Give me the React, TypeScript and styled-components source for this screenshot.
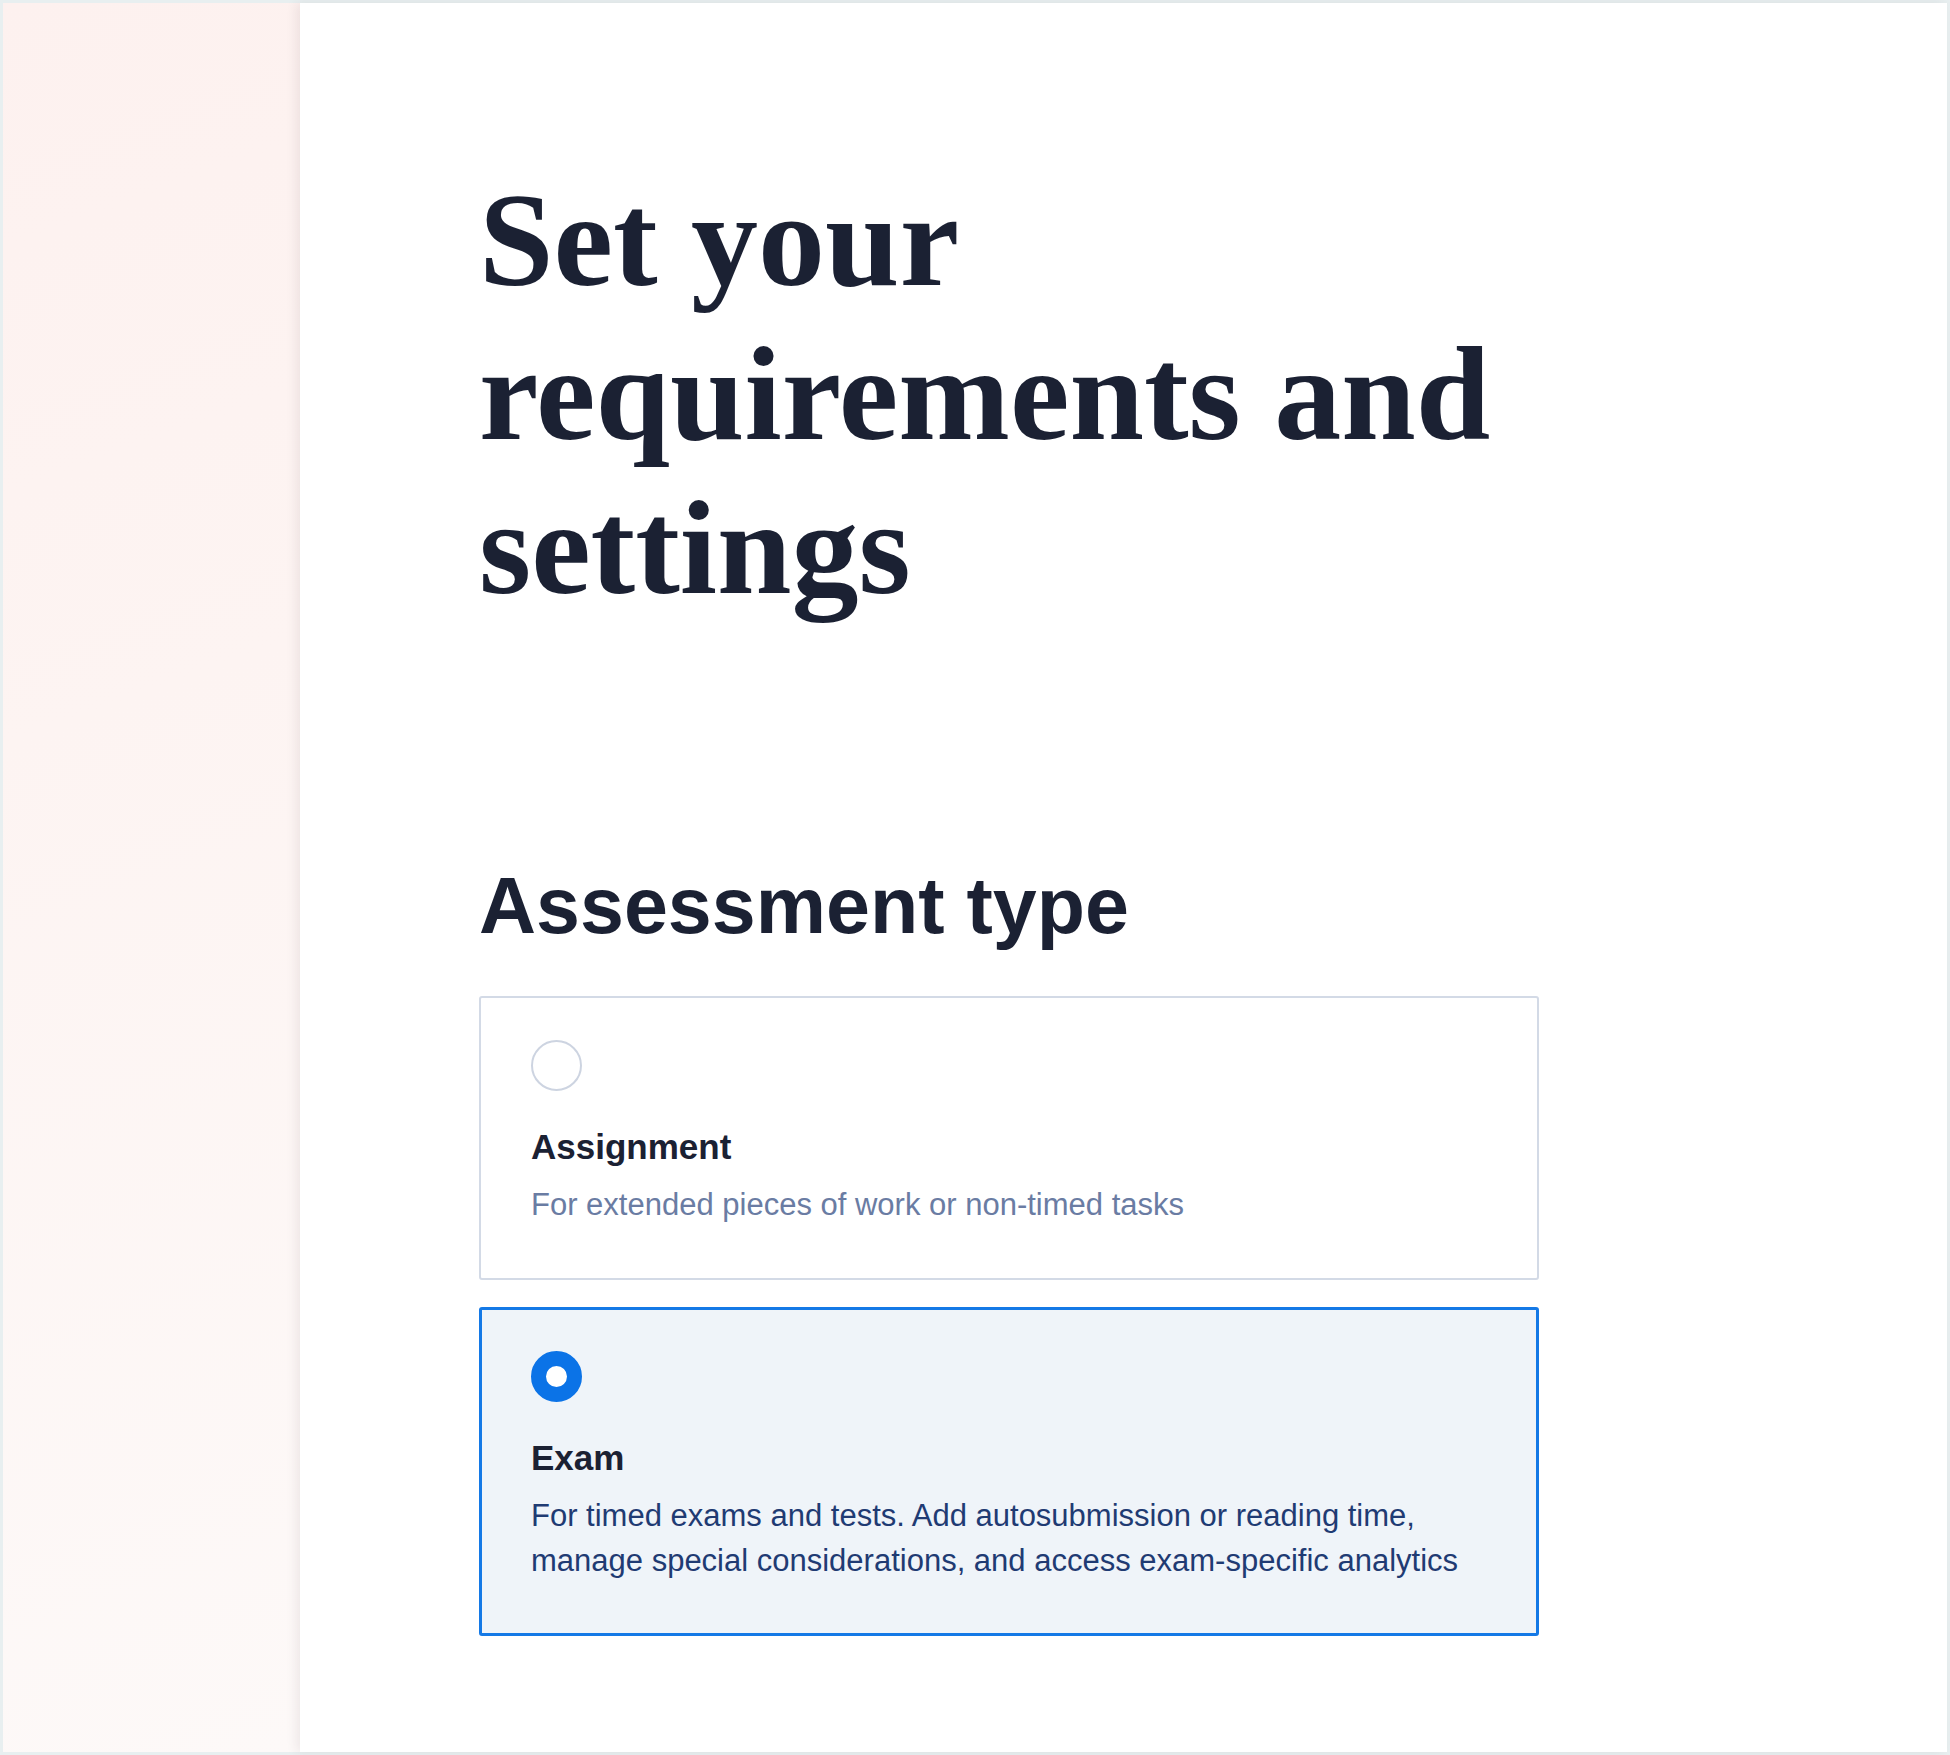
import { useState } from "react";
import styled, { createGlobalStyle } from "styled-components";

const GlobalStyle = createGlobalStyle`
  * {
    box-sizing: border-box;
  }

  html,
  body {
    margin: 0;
    padding: 0;
    background: #e8eff0;
  }

  #root {
    min-height: 100vh;
    padding: 3px;
    display: flex;
  }
`;

const Frame = styled.div`
  flex-grow: 1;
  display: grid;
  grid-template-columns: 297px 1fr;
  min-height: calc(100vh - 6px);
`;

const Sidebar = styled.aside`
  background: linear-gradient(160deg, #fdf1ef 0%, #fdf4f2 40%, #fdf9f8 100%);
`;

const Main = styled.main`
  position: relative;
  background: #ffffff;
  box-shadow: -4px 0 10px rgba(60, 40, 50, 0.08);
  padding: 160px 0 80px 179px;
`;

const Column = styled.div`
  width: 1060px;
`;

const Heading = styled.h1`
  margin: 0;
  font-family: "Liberation Serif", "DejaVu Serif", serif;
  font-weight: 700;
  font-size: 134px;
  line-height: 154px;
  color: #1b2133;
  max-width: 1040px;
`;

const SectionTitle = styled.h2`
  margin: 233px 0 43px;
  font-family: "Liberation Sans", Arial, sans-serif;
  font-weight: 700;
  font-size: 79px;
  line-height: 95px;
  color: #1b2133;
`;

const Options = styled.div`
  display: flex;
  flex-direction: column;
  gap: 27px;
`;

const OptionCard = styled.label<{ $selected: boolean }>`
  display: flex;
  flex-direction: column;
  align-items: flex-start;
  padding: ${(p) => (p.$selected ? "41px 49px 50px" : "42px 50px 51px")};
  border: ${(p) => (p.$selected ? "3px solid #1479e6" : "2px solid #d3dae6")};
  border-radius: 3px;
  background: ${(p) => (p.$selected ? "#eff4f9" : "#ffffff")};
  cursor: pointer;
`;

const Radio = styled.span<{ $checked: boolean }>`
  width: 51px;
  height: 51px;
  border-radius: 50%;
  background: #ffffff;
  border: ${(p) => (p.$checked ? "15px solid #0b73e7" : "2px solid #cdd4e1")};
`;

const OptionTitle = styled.div`
  margin-top: 34px;
  font-family: "Liberation Sans", Arial, sans-serif;
  font-weight: 700;
  font-size: 35px;
  line-height: 44px;
  color: #1b2133;
`;

const OptionText = styled.p<{ $selected: boolean }>`
  margin: 13px 0 0;
  font-family: "Liberation Sans", Arial, sans-serif;
  font-size: 31px;
  line-height: 45px;
  color: ${(p) => (p.$selected ? "#1f3b73" : "#6a7ca3")};
`;

const options = [
  {
    id: "assignment",
    title: "Assignment",
    text: "For extended pieces of work or non-timed tasks",
  },
  {
    id: "exam",
    title: "Exam",
    text: "For timed exams and tests. Add autosubmission or reading time, manage special considerations, and access exam-specific analytics",
  },
];

const App = () => {
  const [selected, setSelected] = useState("exam");

  return (
    <>
      <GlobalStyle />
      <Frame>
        <Sidebar />
        <Main>
          <Column>
            <Heading>Set your requirements and settings</Heading>
            <SectionTitle>Assessment type</SectionTitle>
            <Options>
              {options.map((option) => {
                const isSelected = selected === option.id;
                return (
                  <OptionCard
                    key={option.id}
                    $selected={isSelected}
                    onClick={() => setSelected(option.id)}
                  >
                    <Radio $checked={isSelected} />
                    <OptionTitle>{option.title}</OptionTitle>
                    <OptionText $selected={isSelected}>{option.text}</OptionText>
                  </OptionCard>
                );
              })}
            </Options>
          </Column>
        </Main>
      </Frame>
    </>
  );
};

export default App;
